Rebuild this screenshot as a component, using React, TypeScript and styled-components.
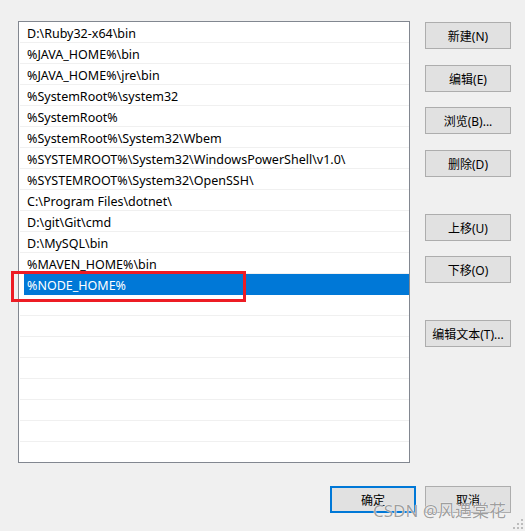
import React from "react";
import styled, { createGlobalStyle } from "styled-components";

const GlobalStyle = createGlobalStyle`
  html, body {
    margin: 0;
    padding: 0;
    background: #f0f0f0;
  }
  body {
    font-family: "Noto Sans", "Noto Sans CJK SC", sans-serif;
    font-size: 12px;
    color: #000;
  }
`;

const Dialog = styled.div`
  position: relative;
  width: 525px;
  height: 531px;
  box-sizing: border-box;
  padding: 21px 14px 0 18px;
  display: flex;
  flex-direction: column;
  overflow: hidden;
`;

const Main = styled.div`
  display: flex;
  gap: 15px;
`;

const ListBox = styled.div`
  width: 392px;
  height: 442px;
  box-sizing: border-box;
  border: 1px solid #828790;
  background: #fff;
  padding-left: 1px;
  overflow: hidden;
`;

const Row = styled.div<{ $selected?: boolean }>`
  height: 18px;
  padding-top: 2px;
  line-height: 19px;
  font-size: 12.5px;
  border-bottom: 1px solid ${(p) => (p.$selected ? "#0078d7" : "#f0f0f0")};
  background: ${(p) => (p.$selected ? "#0078d7" : "transparent")};
  color: ${(p) => (p.$selected ? "#fff" : "#000")};
  margin-left: ${(p) => (p.$selected ? "4px" : "0")};
  padding-left: ${(p) => (p.$selected ? "3px" : "7px")};
  white-space: nowrap;
`;

const Side = styled.div`
  display: flex;
  flex-direction: column;
  padding-top: 1px;
`;

const Button = styled.button<{ $top?: number; $default?: boolean }>`
  width: 86px;
  height: 27px;
  margin-top: ${(p) => p.$top ?? 0}px;
  box-sizing: border-box;
  background: #e1e1e1;
  border: ${(p) => (p.$default ? "2px solid #0078d7" : "1px solid #adadad")};
  border-radius: 0;
  padding: 0;
  font-family: "Noto Sans", "Noto Sans CJK SC", sans-serif;
  font-size: 12px;
  color: #000;
`;

const Footer = styled.div`
  display: flex;
  justify-content: flex-end;
  gap: 9px;
  margin-top: 23px;
`;

const Highlight = styled.div`
  position: absolute;
  left: 11px;
  top: 271px;
  width: 235px;
  height: 31px;
  box-sizing: border-box;
  border: 3px solid #ed1c24;
  pointer-events: none;
`;

const Watermark = styled.div`
  position: absolute;
  left: 373px;
  top: 500px;
  font-family: "Noto Sans", "Noto Sans CJK SC", sans-serif;
  font-size: 17px;
  line-height: 22px;
  color: rgba(115, 115, 115, 0.7);
  text-shadow: 0 0 1px #fff, 0 0 1px #fff;
  white-space: nowrap;
  pointer-events: none;
`;

const Grip = styled.svg`
  position: absolute;
  right: 2px;
  bottom: 2px;
`;

const paths = [
  "D:\\Ruby32-x64\\bin",
  "%JAVA_HOME%\\bin",
  "%JAVA_HOME%\\jre\\bin",
  "%SystemRoot%\\system32",
  "%SystemRoot%",
  "%SystemRoot%\\System32\\Wbem",
  "%SYSTEMROOT%\\System32\\WindowsPowerShell\\v1.0\\",
  "%SYSTEMROOT%\\System32\\OpenSSH\\",
  "C:\\Program Files\\dotnet\\",
  "D:\\git\\Git\\cmd",
  "D:\\MySQL\\bin",
  "%MAVEN_HOME%\\bin",
  "%NODE_HOME%",
];

const selected = 12;
const rows = [...paths, ...Array(8).fill("")];

const sideButtons = [
  { label: "新建(N)", top: 0 },
  { label: "编辑(E)", top: 16 },
  { label: "浏览(B)...", top: 15 },
  { label: "删除(D)", top: 16 },
  { label: "上移(U)", top: 37 },
  { label: "下移(O)", top: 15 },
  { label: "编辑文本(T)...", top: 37 },
];

export default function App() {
  return (
    <>
      <GlobalStyle />
      <Dialog>
        <Main>
          <ListBox>
            {rows.map((text, i) => (
              <Row key={i} $selected={i === selected}>
                {text}
              </Row>
            ))}
          </ListBox>
          <Side>
            {sideButtons.map((b) => (
              <Button key={b.label} $top={b.top}>
                {b.label}
              </Button>
            ))}
          </Side>
        </Main>
        <Footer>
          <Button $default>确定</Button>
          <Button>取消</Button>
        </Footer>
        <Highlight />
        <Watermark>CSDN @风遇棠花</Watermark>
        <Grip width="10" height="10" viewBox="0 0 10 10">
          <g fill="#bcbcbc">
            <rect x="8" y="0" width="2" height="2" />
            <rect x="4" y="4" width="2" height="2" />
            <rect x="8" y="4" width="2" height="2" />
            <rect x="0" y="8" width="2" height="2" />
            <rect x="4" y="8" width="2" height="2" />
            <rect x="8" y="8" width="2" height="2" />
          </g>
        </Grip>
      </Dialog>
    </>
  );
}
